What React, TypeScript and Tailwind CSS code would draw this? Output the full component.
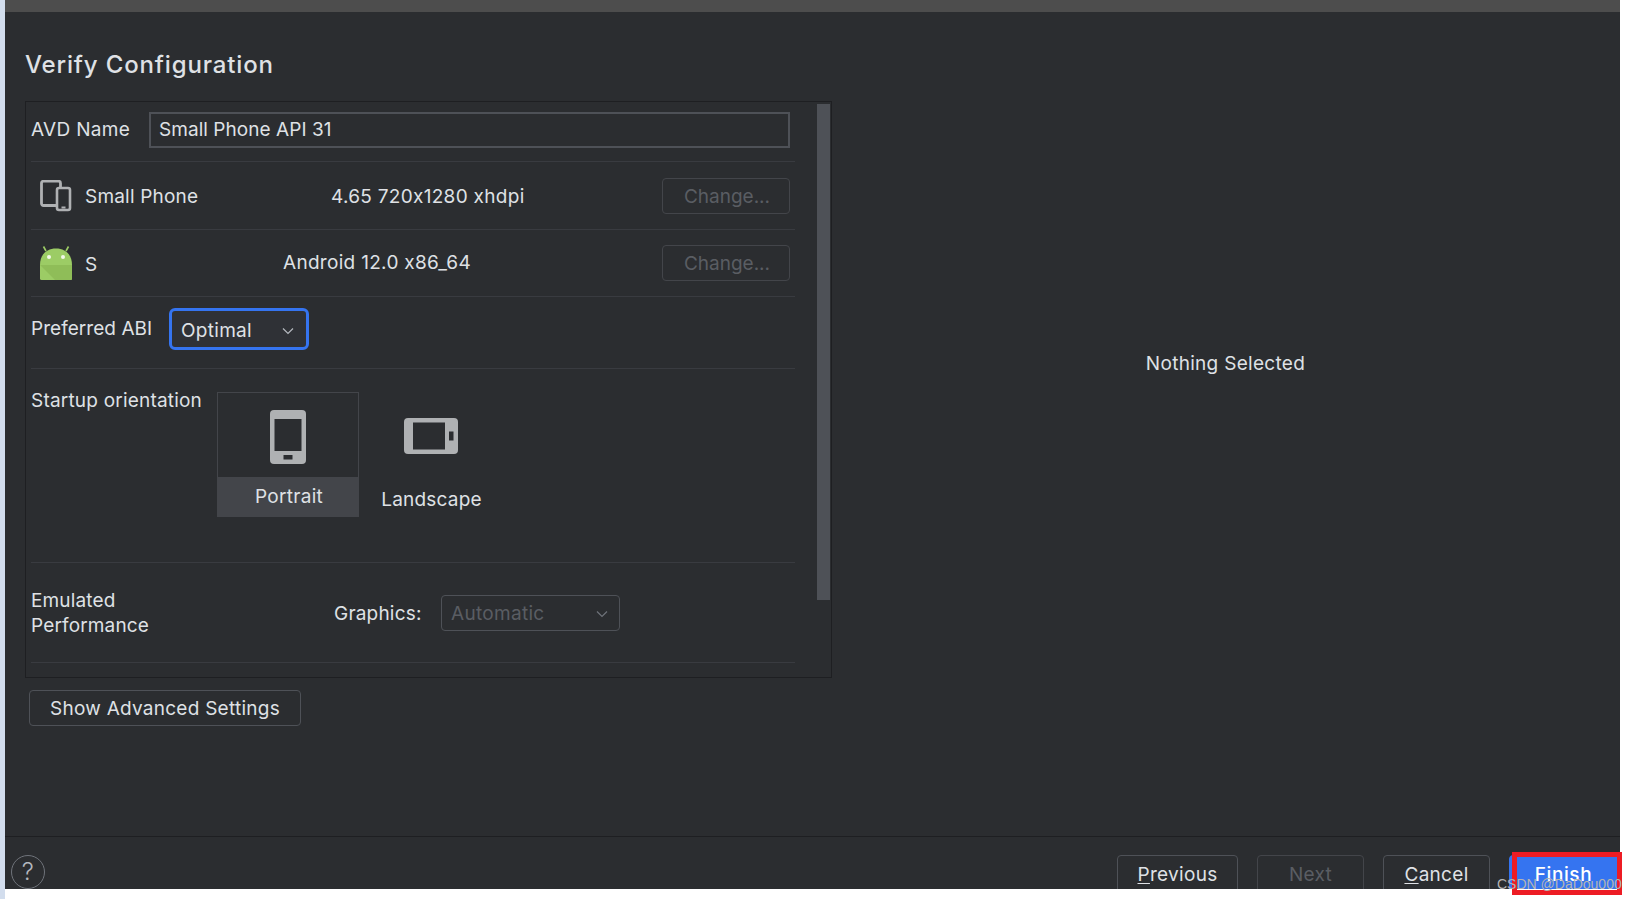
import { ReactNode } from 'react';

function Chevron({ className }: { className: string }) {
  return (
    <svg width="12" height="8" viewBox="0 0 12 8" fill="none" className={className}>
      <path d="M1 1.5 L6 6.5 L11 1.5" stroke="currentColor" strokeWidth="1.2" />
    </svg>
  );
}

function DevicesIcon() {
  return (
    <svg width="32" height="32" viewBox="0 0 32 32" fill="none" className="shrink-0">
      <path d="M16 25.5H3.5a2 2 0 0 1-2-2V3.2a2 2 0 0 1 2-2h15a2 2 0 0 1 2 2V7" stroke="#afb1b3" strokeWidth="2.8" />
      <rect x="17" y="8" width="13" height="22" rx="2" stroke="#afb1b3" strokeWidth="2.6" />
      <rect x="21.5" y="26.5" width="4" height="2" fill="#afb1b3" />
    </svg>
  );
}

function AndroidIcon() {
  return (
    <svg width="34" height="36" viewBox="0 0 34 36" className="shrink-0">
      <path d="M7 6 L4.5 1.5 M27 6 L29.5 1.5" stroke="#9ccc65" strokeWidth="1.6" />
      <path d="M1 20C1 9 8 3.5 17 3.5S33 9 33 20V33.5a1.5 1.5 0 0 1-1.5 1.5H2.5A1.5 1.5 0 0 1 1 33.5Z" fill="#9ccc65" />
      <path d="M1 20H33V33.5a1.5 1.5 0 0 1-1.5 1.5H16Z" fill="#8fbd58" />
      <circle cx="10" cy="12" r="2" fill="#f3f8ea" />
      <circle cx="24" cy="12" r="2" fill="#f3f8ea" />
    </svg>
  );
}

function PortraitIcon() {
  return (
    <svg width="36" height="54" viewBox="0 0 36 54">
      <rect width="36" height="54" rx="4" fill="#afb1b3" />
      <rect x="4.5" y="9" width="27" height="32" fill="#2b2d30" />
      <rect x="13.5" y="45" width="9" height="4.5" fill="#2b2d30" />
    </svg>
  );
}

function LandscapeIcon() {
  return (
    <svg width="54" height="36" viewBox="0 0 54 36">
      <rect width="54" height="36" rx="4" fill="#afb1b3" />
      <rect x="9" y="4.5" width="32" height="27" fill="#2b2d30" />
      <rect x="45" y="13.5" width="4.5" height="9" fill="#2b2d30" />
    </svg>
  );
}

function ChangeButton() {
  return (
    <div className="ml-auto mr-[5px] flex h-[36px] w-[128px] shrink-0 items-center justify-center rounded-[4px] border border-[#43454a] pl-[2px] pt-[2px] tracking-normal text-[#5a5d63]">
      Change...
    </div>
  );
}

function FooterButton({ children, className }: { children: ReactNode; className: string }) {
  return (
    <div className={`flex h-[40px] shrink-0 items-center justify-center rounded-[4px] border ${className}`}>
      {children}
    </div>
  );
}

export default function App() {
  return (
    <div className="flex h-[899px] w-[1630px] overflow-hidden bg-white font-['Inter',sans-serif] text-[19px] leading-[24px] tracking-[0.3px] text-[#dfe1e5] [font-feature-settings:'calt'_0]">
      <div className="w-[5px] shrink-0 bg-[#d2dded]" />
      <div className="flex h-[889px] w-[1615px] shrink-0 flex-col bg-[#2b2d30]">
        <div className="h-[12px] shrink-0 bg-[#4d4d4d]" />

        <div className="flex h-[824px] shrink-0">
          {/* left pane */}
          <div className="w-[826px] shrink-0 pl-[20px]">
            <h1 className="mt-[41px] h-[48px] text-[24px] font-medium leading-[24px] tracking-[0.85px]">Verify Configuration</h1>
            <div className="flex h-[577px] w-[807px] border border-[#1e1f22]">
              <div className="w-[769px] shrink-0 pl-[5px]">
                <div className="flex h-[60px] items-start border-b border-[#393b40] pt-[10px]">
                  <span className="w-[118px] shrink-0 pt-[6px]">AVD Name</span>
                  <div className="flex h-[36px] w-[641px] items-center border-2 border-[#4e5157] pl-[8px] tracking-[0.05px]">Small Phone API 31</div>
                </div>
                <div className="flex h-[68px] items-center border-b border-[#393b40]">
                  <span className="ml-[9px] mr-[13px] flex"><DevicesIcon /></span>
                  <span className="w-[246px] shrink-0 pt-[2px] tracking-[0.2px]">Small Phone</span>
                  <span className="pt-[2px]">4.65 720x1280 xhdpi</span>
                  <ChangeButton />
                </div>
                <div className="flex h-[67px] items-center border-b border-[#393b40]">
                  <span className="ml-[8px] mr-[12px] flex"><AndroidIcon /></span>
                  <span className="w-[198px] shrink-0 pt-[3px]">S</span>
                  <span>Android 12.0 x86_64</span>
                  <ChangeButton />
                </div>
                <div className="flex h-[72px] items-start border-b border-[#393b40] pt-[11px]">
                  <span className="w-[138px] shrink-0 pt-[9px] tracking-[0.05px]">Preferred ABI</span>
                  <div className="flex h-[42px] w-[140px] items-center justify-between rounded-[6px] border-[3px] border-[#3574f0] bg-[#2f3136] pl-[9px] pr-[12px] pt-[4px]">
                    Optimal
                    <Chevron className="text-[#b4b8bf]" />
                  </div>
                </div>
                <div className="flex h-[194px] items-start border-b border-[#393b40]">
                  <span className="mt-[20px] w-[186px] shrink-0 tracking-[0.2px]">Startup orientation</span>
                  <div className="mt-[23px] flex h-[125px] w-[142px] shrink-0 flex-col items-center border border-[#43454a]">
                    <div className="flex h-[84px] items-start pt-[17px]"><PortraitIcon /></div>
                    <div className="flex h-[39px] w-full items-center justify-center bg-[#43454a] pl-[2px]">Portrait</div>
                  </div>
                  <div className="flex w-[143px] shrink-0 flex-col items-center pt-[49px]">
                    <LandscapeIcon />
                    <span className="ml-[2px] mt-[34px] tracking-[0.2px]">Landscape</span>
                  </div>
                </div>
                <div className="flex h-[100px] items-center border-b border-[#393b40]">
                  <span className="w-[303px] shrink-0 leading-[25px] tracking-[0.15px]">Emulated<br />Performance</span>
                  <span className="w-[107px] shrink-0 pt-[2px] tracking-[0.2px]">Graphics:</span>
                  <div className="flex h-[36px] w-[179px] items-center justify-between rounded-[4px] border border-[#4e5157] pl-[9px] pr-[11px] pt-[2px] text-[#5a5d63]">
                    Automatic
                    <Chevron className="text-[#6f737a]" />
                  </div>
                </div>
              </div>
              <div className="mt-[2px] ml-[22px] h-[496px] w-[13px] shrink-0 bg-[#4e5157]" />
            </div>
            <div className="ml-[4px] mt-[12px] flex h-[36px] w-[272px] items-center justify-center rounded-[4px] border border-[#4e5157] pt-[2px] tracking-[0.25px]">
              Show Advanced Settings
            </div>
          </div>

          {/* right pane */}
          <div className="flex h-[704px] flex-1 items-center justify-center">Nothing Selected</div>
        </div>

        {/* footer */}
        <div className="relative flex h-[53px] shrink-0 items-start overflow-hidden border-t border-[#1e1f22] pl-[6px] pr-[2px] pt-[18px]">
          <div className="flex h-[34px] w-[34px] items-center justify-center rounded-full border border-[#6f737a] text-[24px] font-light text-[#b4b8bf]">?</div>
          <FooterButton className="ml-auto w-[121px] border-[#4e5157]"><span><span className="underline underline-offset-2">P</span>revious</span></FooterButton>
          <FooterButton className="ml-[19px] w-[107px] border-[#43454a] text-[#5a5d63]">Next</FooterButton>
          <FooterButton className="ml-[19px] w-[107px] border-[#4e5157]"><span><span className="underline underline-offset-2">C</span>ancel</span></FooterButton>
          <FooterButton className="ml-[19px] w-[109px] border-[#3574f0] bg-[#3574f0] font-medium tracking-[0.6px] text-white">Finish</FooterButton>
        </div>
      </div>

      {/* screenshot annotations */}
      <div className="absolute left-[1512px] top-[852px] h-[43px] w-[110px] border-[5px] border-[#ed1c24]" />
      <div className="absolute left-[1497px] top-[875px] font-['Liberation_Sans',sans-serif] text-[14px] leading-[18px] tracking-normal text-[#b4b4b4]">CSDN @DaDou000</div>
    </div>
  );
}
